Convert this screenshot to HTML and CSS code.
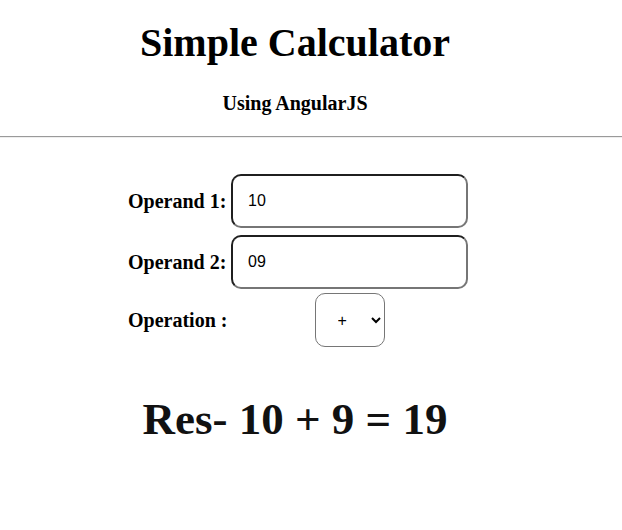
FILE: index.html
```html
<!DOCTYPE html>
<html lang="en">

<head>
    <meta charset="UTF-8">
    <meta name="viewport" content="width=device-width, initial-scale=1.0">
    <title>Simple Calculator</title>
    <link rel="stylesheet" href="styles.css">
</head>

<body>
    <div class="header">
        <h1>Simple Calculator</h1>
        <h3>Using AngularJS</h3>
    </div>

    <hr>

    <div class="main">
        <form class="calc-form">
            <div class="form-row">
                <label class="field-label" for="op1">Operand 1:</label>
                <input class="field-input" id="op1" type="text" value="10">
            </div>

            <div class="form-row">
                <label class="field-label" for="op2">Operand 2:</label>
                <input class="field-input" id="op2" type="text" value="09">
            </div>

            <div class="form-row form-row-last">
                <label class="field-label" for="oper">Operation :</label>
                <div class="field-cell">
                    <select class="field-select" id="oper">
                        <option selected>+</option>
                        <option>-</option>
                        <option>*</option>
                        <option>/</option>
                    </select>
                </div>
            </div>
        </form>

        <h1 class="result">Res- 10 + 9 = 19</h1>
    </div>
</body>

</html>
```

FILE: styles.css
```css
/* Reset */
body {
    margin: 0;
    font-family: "Liberation Serif", "Times New Roman", serif;
    color: black;
    background: white;
}

.header,
.main {
    width: 590px;
}

h1 {
    margin: 20px 0 0;
    font-size: 40px;
    line-height: 46px;
    text-align: center;
}

h3 {
    margin: 26px 0 0;
    font-size: 20px;
    line-height: 23px;
    text-align: center;
}

hr {
    margin: 21px 0 0;
    border: none;
    border-top: 1px solid #9a9a9a;
    border-bottom: 1px solid #eeeeee;
}

/* Form rows */
.calc-form {
    margin: 36px 0 0 128px;
}

.form-row {
    display: flex;
    align-items: center;
    height: 54px;
    margin-bottom: 7px;
}

.form-row-last {
    margin-top: -3px;
    margin-bottom: 0;
}

.field-label {
    width: 103px;
    font-size: 20px;
    font-weight: bold;
    line-height: 23px;
}

.field-input {
    box-sizing: border-box;
    width: 237px;
    height: 54px;
    padding: 0 15px;
    font-family: "Liberation Sans", Arial, sans-serif;
    font-size: 16px;
    color: black;
    border: 2px solid;
    border-color: #1f1f1f #767676 #767676 #1f1f1f;
    border-radius: 10px;
    outline: none;
}

.field-cell {
    width: 237px;
    display: flex;
    justify-content: center;
}

.field-select {
    box-sizing: border-box;
    width: 70px;
    height: 54px;
    padding: 0 4px 0 18px;
    font-family: "Liberation Sans", Arial, sans-serif;
    font-size: 16px;
    color: black;
    background: white;
    border: 1px solid #767676;
    border-radius: 10px;
}

.result {
    margin-top: 46px;
    font-size: 45px;
    line-height: 52px;
    color: #111;
}
```
